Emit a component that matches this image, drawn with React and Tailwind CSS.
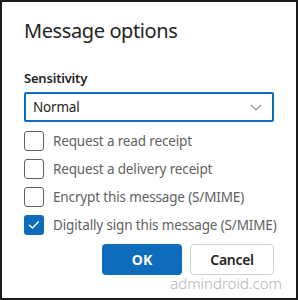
import React from "react";

const rows = [
  { label: "Request a read receipt", checked: false },
  { label: "Request a delivery receipt", checked: false },
  { label: "Encrypt this message (S/MIME)", checked: false },
  { label: "Digitally sign this message (S/MIME)", checked: true },
];

const Check = ({ checked }) => (
  <div
    className={
      checked
        ? "flex h-5 w-5 shrink-0 items-center justify-center rounded-[3px] bg-[#0f6cbd]"
        : "h-5 w-5 shrink-0 rounded-[3px] border border-[#616161] bg-white"
    }
  >
    {checked && (
      <svg width="12" height="10" viewBox="0 0 12 10" fill="none">
        <path d="M1.5 5.2 4.4 8 10.5 1.8" stroke="white" strokeWidth="1.3" strokeLinecap="round" strokeLinejoin="round" />
      </svg>
    )}
  </div>
);

const App = () => {
  return (
    <div className="flex h-[300px] w-[298px] flex-col border-2 border-[#1b1b1b] bg-white px-[22px] font-['Noto_Sans',sans-serif]">
      <h1 className="mt-[15px] text-[20px] leading-[28px] tracking-[-0.4px] text-[#242424]">Message options</h1>
      <label className="mt-[23px] text-[13px] font-semibold leading-[20px] tracking-[-0.2px] text-[#242424]">Sensitivity</label>
      <div className="mt-[4px] flex h-[30px] items-center justify-between rounded-[2px] border-2 border-[#0f6cbd] pl-[7px] pr-[10px]">
        <span className="text-[13.5px] tracking-[-0.2px] text-[#242424]">Normal</span>
        <svg width="12" height="7" viewBox="0 0 12 7" fill="none">
          <path d="M0.8 0.8 6 6 11.2 0.8" stroke="#8a8a8a" strokeWidth="1.1" />
        </svg>
      </div>
      <div className="mt-[9px] flex flex-col gap-2">
        {rows.map((r) => (
          <div key={r.label} className="flex h-5 items-center gap-[9px]">
            <Check checked={r.checked} />
            <span className="whitespace-nowrap text-[13.5px] tracking-[-0.15px] text-[#616161]">{r.label}</span>
          </div>
        ))}
      </div>
      <div className="mt-[9px] flex justify-end gap-2">
        <button className="h-[31px] w-[80px] rounded-[4px] bg-[#0f6cbd] text-[14px] font-bold text-white">OK</button>
        <button className="h-[31px] w-[84px] rounded-[4px] border border-[#d1d1d1] bg-white text-[14px] font-semibold tracking-[-0.3px] text-[#242424]">
          Cancel
        </button>
      </div>
      <div className="mr-[-8px] self-end text-[15px] font-light leading-[17px] text-[#b4b4b4]">admindroid.com</div>
    </div>
  );
};

export default App;
